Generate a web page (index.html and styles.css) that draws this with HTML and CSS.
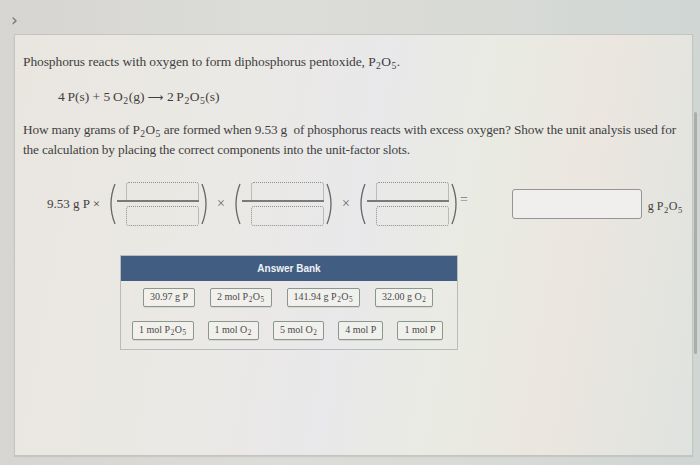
FILE: index.html
```html
<!DOCTYPE html>
<html>
<head>
<meta charset="utf-8">
<link rel="stylesheet" href="styles.css">
</head>
<body>
<div class="page">
  <div class="chev">&#x203A;</div>
  <div class="panel">
    <p class="intro">Phosphorus reacts with oxygen to form diphosphorus pentoxide, P<sub>2</sub>O<sub>5</sub>.</p>
    <p class="eq">4&#8201;P(s) + 5&#8201;O<sub>2</sub>(g) <span class="arrow">&#x27F6;</span> 2&#8201;P<sub>2</sub>O<sub>5</sub>(s)</p>
    <p class="question">How many grams of P<sub>2</sub>O<sub>5</sub> are formed when 9.53 g &nbsp;of phosphorus reacts with excess oxygen? Show the unit analysis used for the calculation by placing the correct components into the unit-factor slots.</p>

    <div class="calc">
      <span class="start">9.53 g P &times;</span>
      <div class="group">
        <svg class="paren" width="10" height="44" viewBox="0 0 10 44"><path d="M8 2 Q0 22 8 42" fill="none" stroke="#666" stroke-width="1.3"/></svg>
        <div class="frac">
          <div class="slot top"></div>
          <div class="bar"></div>
          <div class="slot bottom"></div>
        </div>
        <svg class="paren close" width="10" height="44" viewBox="0 0 10 44"><path d="M2 2 Q10 22 2 42" fill="none" stroke="#666" stroke-width="1.3"/></svg>
      </div>
      <span class="times">&times;</span>
      <div class="group">
        <svg class="paren" width="10" height="44" viewBox="0 0 10 44"><path d="M8 2 Q0 22 8 42" fill="none" stroke="#666" stroke-width="1.3"/></svg>
        <div class="frac">
          <div class="slot top"></div>
          <div class="bar"></div>
          <div class="slot bottom"></div>
        </div>
        <svg class="paren close" width="10" height="44" viewBox="0 0 10 44"><path d="M2 2 Q10 22 2 42" fill="none" stroke="#666" stroke-width="1.3"/></svg>
      </div>
      <span class="times">&times;</span>
      <div class="group">
        <svg class="paren" width="10" height="44" viewBox="0 0 10 44"><path d="M8 2 Q0 22 8 42" fill="none" stroke="#666" stroke-width="1.3"/></svg>
        <div class="frac">
          <div class="slot top"></div>
          <div class="bar"></div>
          <div class="slot bottom"></div>
        </div>
        <svg class="paren close" width="10" height="44" viewBox="0 0 10 44"><path d="M2 2 Q10 22 2 42" fill="none" stroke="#666" stroke-width="1.3"/></svg>
      </div>
      <span class="equals">=</span>
      <div class="answer"></div>
      <span class="unit">g P<sub>2</sub>O<sub>5</sub></span>
    </div>

    <div class="bank">
      <div class="bank-head">Answer Bank</div>
      <div class="bank-body">
        <div class="row r1">
          <span class="chip">30.97 g P</span>
          <span class="chip">2 mol P<sub>2</sub>O<sub>5</sub></span>
          <span class="chip">141.94 g P<sub>2</sub>O<sub>5</sub></span>
          <span class="chip">32.00 g O<sub>2</sub></span>
        </div>
        <div class="row r2">
          <span class="chip">1 mol P<sub>2</sub>O<sub>5</sub></span>
          <span class="chip">1 mol O<sub>2</sub></span>
          <span class="chip">5 mol O<sub>2</sub></span>
          <span class="chip">4 mol P</span>
          <span class="chip">1 mol P</span>
        </div>
      </div>
    </div>
  </div>
  <div class="scroll"></div>
</div>
</body>
</html>
```

FILE: styles.css
```css
html, body {
  margin: 0;
  padding: 0;
}
body {
  width: 700px;
  height: 465px;
  overflow: hidden;
  font-family: "Liberation Serif", "Times New Roman", serif;
  color: #3f3f3f;
}
.page {
  position: relative;
  width: 700px;
  height: 465px;
  background: linear-gradient(90deg, #d6d5d2 0%, #dcdcd8 40%, #d8dad6 70%, #cfd6d4 100%);
  padding-top: 12px;
  box-sizing: border-box;
}
.chev {
  margin-left: 11px;
  font-family: "DejaVu Sans", sans-serif;
  font-size: 17px;
  line-height: 16px;
  height: 22px;
  color: #777;
}
.panel {
  margin-left: 14px;
  width: 679px;
  height: 422px;
  box-sizing: border-box;
  border: 1px solid #c5c5c0;
  background: linear-gradient(100deg, #e9e6e0 0%, #ebe9e5 30%, #e9e8ea 50%, #e9ebe3 65%, #ebe6df 80%, #dfe3e0 100%);
  padding: 18px 0 0 8px;
  box-shadow: 0 1px 1px rgba(0,0,0,0.08);
}
p {
  margin: 0;
}
sub {
  font-size: 72%;
  vertical-align: -3px;
  line-height: 1;
  padding: 0 0.5px;
}
.intro {
  font-size: 13.5px;
  line-height: 18px;
  letter-spacing: -0.1px;
}
.eq {
  margin-top: 17px;
  margin-left: 35px;
  font-size: 13.5px;
  line-height: 18px;
}
.arrow {
  font-family: "DejaVu Sans", sans-serif;
  font-size: 11px;
}
.question {
  margin-top: 13px;
  font-size: 13.3px;
  line-height: 20px;
  width: 668px;
  letter-spacing: -0.15px;
}
.calc {
  margin-top: 21px;
  display: flex;
  align-items: center;
  height: 46px;
  font-size: 13px;
}
.start {
  margin-left: 24px;
  margin-right: 7px;
}
.group {
  display: flex;
  align-items: center;
}
.paren {
  display: block;
  flex: none;
}
.paren.close {
  margin-left: 1px;
}
.frac {
  display: flex;
  flex-direction: column;
  align-items: flex-end;
  width: 82px;
}
.slot {
  border: 1px dotted #8e8e8e;
  border-radius: 3px;
  box-sizing: border-box;
  width: 73px;
}
.slot.top {
  height: 19px;
  border-bottom: none;
  border-radius: 3px 3px 0 0;
}
.bar {
  width: 82px;
  height: 2px;
  background: #7a7a7a;
  margin-top: -1px;
}
.slot.bottom {
  height: 20px;
  margin-top: 4px;
}
.times {
  margin: 0 7px;
  font-size: 14px;
  color: #666;
}
.equals {
  font-size: 14px;
  color: #777;
  margin-top: -8px;
}
.answer {
  margin-left: 44px;
  width: 130px;
  height: 30px;
  box-sizing: border-box;
  border: 1.5px solid #959595;
  border-radius: 3px;
  background: #f0efed;
}
.unit {
  margin-left: 6px;
  font-size: 12px;
  margin-top: 6px;
}
.bank {
  margin-top: 28px;
  margin-left: 97px;
  width: 338px;
  box-sizing: border-box;
  border: 1px solid #b9bcbe;
}
.bank-head {
  height: 25px;
  background: #415d82;
  color: #eef1f5;
  font-family: "Liberation Sans", Arial, sans-serif;
  font-size: 10px;
  font-weight: bold;
  display: flex;
  align-items: center;
  justify-content: center;
}
.bank-body {
  padding: 7px 0 9px 0;
}
.row {
  display: flex;
  align-items: flex-start;
}
.r1 {
  padding-left: 22px;
  gap: 15px;
}
.r2 {
  margin-top: 14px;
  padding-left: 11px;
  gap: 14px;
}
.chip {
  display: inline-block;
  height: 19px;
  line-height: 16px;
  padding: 0 6px;
  box-sizing: border-box;
  border: 1px solid #8b968c;
  border-radius: 2px;
  background: rgba(245,245,240,0.6);
  font-size: 10px;
  color: #4a4a4a;
  white-space: nowrap;
  box-shadow: 0 1px 0 rgba(0,0,0,0.08);
}
.chip sub {
  vertical-align: -2px;
}
.scroll {
  position: absolute;
  right: 3px;
  top: 112px;
  width: 3px;
  height: 242px;
  border-radius: 2px;
  background: #a9adab;
}
```
